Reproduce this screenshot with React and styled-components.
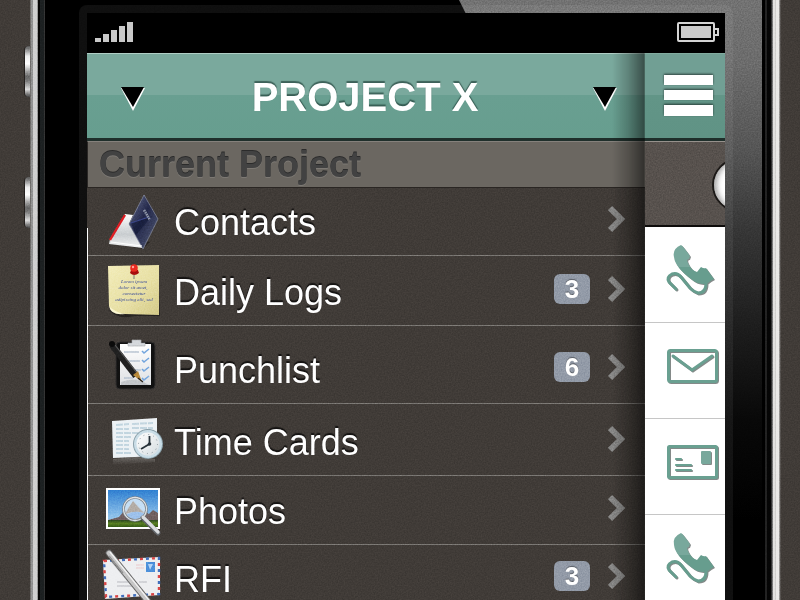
import styled, { createGlobalStyle } from 'styled-components';

const GlobalStyle = createGlobalStyle`
  * {
    box-sizing: border-box;
  }
  body {
    margin: 0;
    background: #3f3a36;
    font-family: 'Liberation Sans', Arial, Helvetica, sans-serif;
  }
  button {
    padding: 0;
    border: 0;
    background: none;
    font: inherit;
    cursor: pointer;
  }
`;

const ContactsIcon = () => (
  <Icon viewBox="0 0 56 54" aria-hidden="true">
    <defs>
      <linearGradient id="cover" x1="0" y1="0" x2="1" y2="1">
        <stop offset="0" stopColor="#6b7394" />
        <stop offset="0.45" stopColor="#23284a" />
        <stop offset="1" stopColor="#59617c" />
      </linearGradient>
      <linearGradient id="pages" x1="0" y1="0" x2="0" y2="1">
        <stop offset="0" stopColor="#ffffff" />
        <stop offset="0.6" stopColor="#c9cdd0" />
        <stop offset="1" stopColor="#f4f4f4" />
      </linearGradient>
    </defs>
    <path d="M5 51 L38 57 L45 50 L20 44z" fill="#000" opacity="0.35" />
    <path d="M20 22 L28 23 L24 32 L38 56 L4 52 L5 47z" fill="url(#pages)" />
    <path d="M5 48 L20 23" stroke="#df1c22" strokeWidth="2.4" />
    <path d="M39 3 L53 27 L38 57 L24 32z" fill="url(#cover)" stroke="#8b91a5" strokeWidth="0.7" />
    <path d="M26 31 L47 24 L31 43z" fill="#111735" opacity="0.6" />
    <path d="M26 31 L44 25" stroke="#3a468a" strokeWidth="1.3" />
    <path d="M39 18 L45 28" stroke="#8e95a8" strokeWidth="2.6" strokeDasharray="1.6 0.7" />
    <path d="M6 50 L37 54" stroke="#fff" strokeWidth="1" />
  </Icon>
);

const NoteIcon = () => (
  <Icon viewBox="0 0 56 54" aria-hidden="true">
    <defs>
      <linearGradient id="paper" x1="0" y1="0" x2="1" y2="1">
        <stop offset="0" stopColor="#f3edba" />
        <stop offset="0.6" stopColor="#e7dfa4" />
        <stop offset="1" stopColor="#d3c988" />
      </linearGradient>
    </defs>
    <path d="M4 48 Q12 58 30 54 L55 54 L54 30z" fill="#000" opacity="0.4" />
    <path d="M3 4 L54 3 L54 53 L20 52 Q6 51 4 44z" fill="url(#paper)" />
    <path d="M4 44 Q9 50 20 52 Q6 54 4 44z" fill="#fbf7d2" />
    <g
      fill="#3b4d9a"
      fontFamily="'Liberation Serif', serif"
      fontSize="5"
      fontStyle="italic"
      textAnchor="middle"
    >
      <text x="29" y="21">Lorem ipsum</text>
      <text x="28" y="27">dolor sit amet,</text>
      <text x="29" y="33">consectetur</text>
      <text x="29" y="39">adipiscing elit, sed</text>
    </g>
    <path d="M25 11 Q29 15 34 11 L33 8 H26z" fill="#a80c0c" />
    <circle cx="29" cy="6" r="3.8" fill="#ea2a20" />
    <circle cx="28" cy="5" r="1.2" fill="#ffa196" />
    <path d="M29 13 V17" stroke="#777" strokeWidth="1" />
  </Icon>
);

const ClipboardIcon = () => (
  <Icon viewBox="0 0 56 54" aria-hidden="true">
    <defs>
      <linearGradient id="sheet" x1="0" y1="0" x2="0" y2="1">
        <stop offset="0" stopColor="#ffffff" />
        <stop offset="1" stopColor="#dfe1e4" />
      </linearGradient>
    </defs>
    <rect x="11" y="2" width="39" height="47" rx="4" fill="#111" stroke="#302f2f" />
    <rect x="15" y="4" width="31" height="41" fill="url(#sheet)" />
    <path d="M23 6 V3 H27 V0 H36 V3 H40 V6z" fill="#d5d8dc" stroke="#a5a8ac" strokeWidth="0.6" />
    <path d="M19 12 H34 M22 21 H35 M27 30 H36 M19 38 H28" stroke="#b9c5d2" strokeWidth="1.4" />
    <g fill="none" stroke="#74a6de" strokeWidth="1.600">
      <path d="M37 11 l2 2 l5 -4" />
      <path d="M37 20 l2 2 l5 -4" />
      <path d="M37 29 l2 2 l5 -4" />
      <path d="M37 38 l2 2 l5 -4" />
    </g>
    <path d="M16 42 Q30 36 42 44 L45 45 H16z" fill="#aeb2b7" opacity="0.6" />
    <path d="M7 5 L31 36" stroke="#202020" strokeWidth="6.5" />
    <path d="M10 5 L32 33" stroke="#595959" strokeWidth="1.2" />
    <circle cx="7" cy="4" r="3" fill="#0a0a0a" />
    <path d="M28 35 L33 31 L37 42z" fill="#b7883a" />
    <path d="M33 38 L38 42" stroke="#222" strokeWidth="1.3" />
  </Icon>
);

const TimeIcon = () => (
  <Icon viewBox="0 0 56 54" aria-hidden="true">
    <defs>
      <linearGradient id="face" x1="0" y1="0" x2="1" y2="1">
        <stop offset="0" stopColor="#ffffff" />
        <stop offset="1" stopColor="#d5dde1" />
      </linearGradient>
      <linearGradient id="mirror" x1="0" y1="0" x2="0" y2="1">
        <stop offset="0" stopColor="#fff" stopOpacity="0.22" />
        <stop offset="1" stopColor="#fff" stopOpacity="0" />
      </linearGradient>
    </defs>
    <path d="M8 47 L32 45 L50 47 L50 50 L8 53z" fill="url(#mirror)" />
    <path d="M7 9 L52 6 V44 L8 46z" fill="#edf2f5" />
    <path
      d="M11 13 L24 12 M27 12 L48 11 M11 17 H24 M27 16 H48 M11 21 H48 M11 25 H27 M11 29 H24 M11 33 H24 M11 37 H24 M11 41 H27"
      stroke="#c3d6e0"
      strokeWidth="2"
      strokeDasharray="7 1"
    />
    <circle cx="43" cy="32" r="15" fill="#8aa0aa" />
    <circle cx="43" cy="32" r="14" fill="#c9dde7" />
    <circle cx="43" cy="32" r="11.5" fill="url(#face)" />
    <circle cx="43" cy="32" r="9.5" fill="none" stroke="#8a969c" strokeWidth="1" strokeDasharray="1 3.97" />
    <path d="M44.500 24 V32 L36 37" fill="none" stroke="#27323a" strokeWidth="1.8" />
    <circle cx="44.500" cy="32" r="1.8" fill="#27323a" />
  </Icon>
);

const PhotosIcon = () => (
  <Icon viewBox="0 0 56 54" aria-hidden="true">
    <defs>
      <linearGradient id="sky" x1="0" y1="0" x2="0" y2="1">
        <stop offset="0" stopColor="#2f7fd1" />
        <stop offset="1" stopColor="#b5dcf5" />
      </linearGradient>
      <linearGradient id="grass" x1="0" y1="0" x2="0" y2="1">
        <stop offset="0" stopColor="#2c4721" />
        <stop offset="0.5" stopColor="#587f22" />
        <stop offset="1" stopColor="#355b16" />
      </linearGradient>
    </defs>
    <rect x="1" y="7" width="54" height="41" fill="#fff" />
    <rect x="3" y="9" width="50" height="37" fill="url(#sky)" />
    <path d="M3 39 L14 36 L19 30 L29 20 L36 28 L44 33 L48 29 L53 32 V41 H3z" fill="#705f60" />
    <rect x="3" y="39" width="50" height="7" fill="url(#grass)" />
    <circle cx="30" cy="28" r="11" fill="#cfe4f7" opacity="0.9" />
    <path d="M20 33 L28 20 L34 27 L39 32 Q31 29 20 33z" fill="#b3aca6" />
    <path d="M21 34 Q30 28 40 33 Q34 40 25 37z" fill="#8bb8ec" opacity="0.7" />
    <circle cx="30" cy="28" r="11.500" fill="none" stroke="#787d82" strokeWidth="2.600" />
    <circle cx="30" cy="28" r="11.500" fill="none" stroke="#dee2e5" strokeWidth="1.300" />
    <path d="M38 37 L53 52" stroke="#606468" strokeWidth="5" strokeLinecap="round" />
    <path d="M38 36 L53 51" stroke="#dadde0" strokeWidth="3.200" strokeLinecap="round" />
  </Icon>
);

const LetterIcon = () => (
  <Icon viewBox="0 0 56 54" aria-hidden="true">
    <path d="M-2 11 L55 8 V46 L0 50z" fill="#eeeff1" />
    <path d="M-1 12 L54 9 V45 L1 48z" fill="none" stroke="#d84545" strokeWidth="2.400" strokeDasharray="3 9" />
    <path
      d="M-1 12 L54 9 V45 L1 48z"
      fill="none"
      stroke="#416fbc"
      strokeWidth="2.400"
      strokeDasharray="3 9"
      strokeDashoffset="6"
    />
    <rect x="41" y="13" width="9" height="10" fill="#4b8fda" />
    <path d="M43 15 h5 l-3 6z" fill="#b2d4f6" />
    <path d="M31 19 h8 M31 16 h8" stroke="#e9c9cc" strokeWidth="1.200" />
    <path d="M12 33 H24 M12 37 H27 M34 33 H42" stroke="#d3d4d8" strokeWidth="2" />
    <path d="M6 9 L46 57" stroke="#000" strokeWidth="5" opacity="0.2" />
    <path d="M4 4 L46 56" stroke="#666" strokeWidth="6.600" strokeLinecap="round" />
    <path d="M4 4 L46 56" stroke="#c6c6c6" strokeWidth="4.800" strokeLinecap="round" />
    <path d="M5 3 L47 55" stroke="#f4f4f4" strokeWidth="1.200" />
    <path d="M4 7 L18 24" stroke="#8f8f8f" strokeWidth="1.200" />
  </Icon>
);

const PhoneIcon = () => (
  <ActionSvg viewBox="0 0 54 54" height="54" aria-hidden="true">
    <defs>
      <linearGradient id="handset" x1="0" y1="0" x2="0" y2="1">
        <stop offset="0.560" stopColor="#78a89c" />
        <stop offset="0.570" stopColor="#679d8e" />
      </linearGradient>
    </defs>
    <path
      d="M17 2 Q19 3 26 13 L25 16 Q22 16 24 20 Q27 27 33 29 L37 24 Q40 26 42 25 L50 36 Q46 38 44 40 Q35 43 27 36 Q11 24 10 14 Q8 6 17 2z"
      fill="url(#handset)"
    />
    <path
      d="M42 40 Q42 50 34 50 Q30 49 26 45 L17 34 Q13 29 8 31 Q2 34 5 39 L12 46"
      fill="none"
      stroke="#679d8e"
      strokeWidth="3"
      strokeLinecap="round"
    />
  </ActionSvg>
);

const MailIcon = () => (
  <ActionSvg viewBox="0 0 54 36" height="36" aria-hidden="true">
    <g fill="none" stroke="#6aa091" strokeWidth="3">
      <rect x="4.500" y="2.500" width="48" height="31" rx="2" />
      <path d="M9 8 L28 22 L48 8" strokeLinecap="round" />
    </g>
  </ActionSvg>
);

const CardIcon = () => (
  <ActionSvg viewBox="0 0 54 36" height="36" aria-hidden="true">
    <rect x="4.500" y="2.500" width="48" height="31" rx="1" fill="none" stroke="#6aa091" strokeWidth="3" />
    <rect x="37" y="7" width="10" height="13" rx="1" fill="#78a89c" />
    <path
      d="M12 15 H17 M12 21 H27 M12 26 H27"
      stroke="#6aa091"
      strokeWidth="2.200"
      strokeLinecap="round"
    />
  </ActionSvg>
);

const Arrow = () => (
  <svg width="24" height="24" viewBox="0 0 24 24" aria-hidden="true">
    <path d="M0 1 L12 24 L24 1z" fill="#fff" />
    <path d="M0 0 H23 L12 20z" fill="#000" />
  </svg>
);

// drop = space above the row content
const ITEMS = [
  { name: 'Contacts', icon: ContactsIcon, drop: 4 },
  { name: 'Daily Logs', icon: NoteIcon, drop: 6, count: 3 },
  { name: 'Punchlist', icon: ClipboardIcon, drop: 14, count: 6 },
  { name: 'Time Cards', icon: TimeIcon, drop: 8 },
  { name: 'Photos', icon: PhotosIcon, drop: 5 },
  { name: 'RFI', icon: LetterIcon, drop: 4, count: 3 },
];

const ACTIONS = [
  { name: 'Call', icon: PhoneIcon },
  { name: 'Email', icon: MailIcon },
  { name: 'Business card', icon: CardIcon },
  { name: 'Call second contact', icon: PhoneIcon },
];

const MenuItem = ({ item }) => {
  const { name, icon: ItemIcon, drop, count } = item;

  return (
    <li>
      <Row href="#" $drop={drop}>
        <ItemIcon />
        <Label>{name}</Label>
        {count && <Badge>{count}</Badge>}
        <svg width="18" height="28" viewBox="0 0 18 28" aria-hidden="true">
          <path d="M2 3 L13 14 L2 25" fill="none" stroke="#868685" strokeWidth="6" />
        </svg>
      </Row>
    </li>
  );
};

const Grain = () => (
  <GrainSvg aria-hidden="true">
    <filter id="grain" x="0" y="0" width="100%" height="100%" colorInterpolationFilters="sRGB">
      <feTurbulence type="fractalNoise" baseFrequency="0.7" numOctaves="2" />
      <feColorMatrix values="1 0 0 0 0  1 0 0 0 0  1 0 0 0 0  0 0 0 0 1" />
    </filter>
    <rect width="100%" height="100%" filter="url(#grain)" />
  </GrainSvg>
);

const App = () => (
  <>
    <GlobalStyle />
    <Page>
      <Grain />
      <Side>
        <VolumeKey />
        <VolumeKey />
      </Side>
      <Phone>
        <LeftRim />
        <Face>
          <Bezel>
            <Screen>
              <StatusBar>
                <svg width="40" height="20" viewBox="0 0 40 20" aria-label="Signal">
                  <path
                    d="M0 16h6v4H0z M8 12h6v8H8z M16 8h6v12h-6z M24 4h6v16h-6z M32 0h6v20h-6z"
                    fill="#c9c9c9"
                  />
                </svg>
                <svg width="42" height="20" viewBox="0 0 42 20" aria-label="Battery">
                  <rect x="1" y="1" width="36" height="18" rx="1" fill="none" stroke="#d4d4d4" strokeWidth="2" />
                  <rect x="4" y="4" width="30" height="12" fill="#cbcbcb" />
                  <path d="M38 7 H41 V13 H38" fill="none" stroke="#d4d4d4" strokeWidth="2" />
                </svg>
              </StatusBar>
              <Panels>
                <Menu>
                  <MenuBar>
                    <button aria-label="Previous project">
                      <Arrow />
                    </button>
                    <Title>PROJECT X</Title>
                    <button aria-label="Next project">
                      <Arrow />
                    </button>
                  </MenuBar>
                  <Section>Current Project</Section>
                  <ListArea>
                    <List>
                      {ITEMS.map((item) => (
                        <MenuItem key={item.name} item={item} />
                      ))}
                    </List>
                    <Grain />
                  </ListArea>
                </Menu>
                <Content>
                  <ContentBar>
                    <button aria-label="Toggle menu">
                      <Burger viewBox="0 0 50 42" aria-hidden="true">
                        <path d="M0 0h49v10H0z M0 15h49v10H0z M0 30h49v11H0z" fill="#fff" />
                      </Burger>
                    </button>
                  </ContentBar>
                  <SearchBar>
                    <Knob />
                    <Grain />
                  </SearchBar>
                  {ACTIONS.map(({ name, icon: ActionIcon }) => (
                    <Action key={name} href="#" aria-label={name}>
                      <ActionIcon />
                    </Action>
                  ))}
                </Content>
              </Panels>
            </Screen>
          </Bezel>
        </Face>
        <RightRim />
      </Phone>
    </Page>
  </>
);

export default App;

const Page = styled.div`
  position: relative;
  display: grid;
  grid-template-columns: 30px 1fr 19px;
  height: 100vh;
  overflow: hidden;
  background: #403b37;
`;

const GrainSvg = styled.svg`
  position: absolute;
  inset: 0;
  width: 100%;
  height: 100%;
  opacity: 0.18;
  mix-blend-mode: overlay;
  pointer-events: none;
  z-index: 1;
`;

const Side = styled.div`
  display: flex;
  flex-direction: column;
  align-items: flex-end;
  gap: 80px;
  padding-top: 46px;
`;

const VolumeKey = styled.div`
  width: 6px;
  height: 51px;
  border-left: 1px solid #25211f;
  border-radius: 4px 0 0 4px;
  background: linear-gradient(#555 0, #eee 20%, #fff 35%, #666 60%, #777 68%, #ddd 85%, #444 100%);
`;

const Phone = styled.div`
  display: flex;
  min-width: 0;
  background: #000;
`;

const LeftRim = styled.div`
  flex: none;
  width: 15px;
  background: linear-gradient(
    90deg,
    #6f6d6b 0 1px,
    #929292 1px 3px,
    #cfcfcf 3px 7px,
    #999 7px 8px,
    #050505 8px 10px,
    #1c2021 10px 14px,
    #333 14px 15px
  );
`;

const RightRim = styled.div`
  flex: none;
  width: 19px;
  background: linear-gradient(
    90deg,
    #000 0 3px,
    #222 3px 5px,
    #050505 5px 9px,
    #333 9px 10px,
    #777 10px 11px,
    #e2e1df 11px 13px,
    #cfcecc 13px 14px,
    #e9e8e6 14px 17px,
    #989694 17px 18px,
    #55514e 18px 19px
  );
`;

const Face = styled.div`
  position: relative;
  flex: 1;
  min-width: 0;
  padding: 5px 29px 0 34px;

  &::before {
    content: '';
    position: absolute;
    inset: 0 0 0 414px;
    background: linear-gradient(#727272 0, #6c6c6c 60px, #555 150px, #363636 230px, #1c1c1c 330px, #080808 420px, #000 520px);
    clip-path: polygon(0 0, 100% 0, 100% 100%, 50% 100%, 8px 16px);
  }
`;

const Bezel = styled.div`
  position: relative;
  height: 100%;
  padding: 8px 8px 0;
  border-radius: 8px 8px 0 0;
  background: rgba(255, 255, 255, 0.06);
`;

const Screen = styled.div`
  position: relative;
  z-index: 2;
  display: flex;
  flex-direction: column;
  height: 100%;
  overflow: hidden;
  background: #000;
`;

const StatusBar = styled.div`
  display: flex;
  flex: none;
  justify-content: space-between;
  height: 40px;
  padding: 9px 6px 0 8px;
`;

const Panels = styled.div`
  display: flex;
  flex: 1;
`;

const Menu = styled.nav`
  position: relative;
  display: flex;
  flex-direction: column;
  flex: 1;
  min-width: 0;
  background: #403b37;

  &::after {
    content: '';
    position: absolute;
    inset: 0 0 0 auto;
    width: 32px;
    border-right: 1px solid rgba(0, 0, 0, 0.4);
    background: linear-gradient(90deg, transparent, rgba(0, 0, 0, 0.22) 50%, rgba(0, 0, 0, 0.52));
    pointer-events: none;
  }
`;

const Bar = styled.div`
  display: flex;
  flex: none;
  align-items: center;
  height: 88px;
  border-top: 1px solid #b0cec5;
  border-bottom: 3px solid #1f2f2b;
  background: linear-gradient(#7aa99d 0 41px, #699f91 41px, #679e8f 100%);

  svg {
    display: block;
  }
`;

const MenuBar = styled(Bar)`
  padding: 6px 28px 0 34px;
`;

const ContentBar = styled(Bar)`
  justify-content: center;
  padding-left: 7px;
  border-top-color: #82ab9f;
  background: linear-gradient(#719f94 0 41px, #629587 41px, #609385 100%);
`;

const Title = styled.h1`
  flex: 1;
  margin: 0;
  padding: 0 8px 5px 0;
  color: #fff;
  font-size: 40px;
  line-height: 44px;
  text-align: center;
  text-shadow: 0 -2px 1px rgba(20, 50, 44, 0.6);
`;

const Burger = styled.svg`
  width: 50px;
  height: 42px;
  overflow: visible;
  filter: drop-shadow(0 -1px 1px rgba(0, 0, 0, 0.6));
`;

const Section = styled.h2`
  flex: none;
  height: 47px;
  margin: 0;
  padding-left: 11px;
  border-top: 1px solid #85817c;
  border-bottom: 1px solid #2a2623;
  border-left: 1px solid #2b2826;
  background: #6b6761;
  color: #424242;
  font-size: 36px;
  line-height: 45px;
  text-shadow: 0 -1px 0 #2b2b2b, 0 1px 0 rgba(255, 255, 255, 0.12);
`;

const ListArea = styled.div`
  position: relative;
`;

const List = styled.ul`
  margin: 0;
  padding: 0 0 0 1px;
  list-style: none;
  background: linear-gradient(90deg, #fff 1px, transparent 1px) 0 40px no-repeat;
`;

const Row = styled.a`
  display: flex;
  align-items: center;
  padding: ${({ $drop }) => $drop}px 19px 9px 17px;
  border-bottom: 1px solid #7b7874;
  background: #403b37;
  color: #fff;
  text-decoration: none;
`;

const Icon = styled.svg`
  flex: none;
  width: 56px;
  height: 54px;
  margin-right: 13px;
  overflow: visible;
`;

const Label = styled.span`
  flex: 1;
  padding-top: 7px;
  font-size: 36px;
  line-height: 40px;
  text-shadow: 0 -2px 1px rgba(0, 0, 0, 0.7);
`;

const Badge = styled.span`
  width: 36px;
  height: 30px;
  margin-right: 18px;
  border-radius: 6px;
  background: #929aa7;
  font-size: 26px;
  font-weight: bold;
  line-height: 30px;
  text-align: center;
  text-shadow: 0 -1px 1px rgba(0, 0, 0, 0.4);
`;

const Content = styled.main`
  flex: none;
  width: 80px;
  background: #fff;
`;

const SearchBar = styled.div`
  position: relative;
  height: 86px;
  padding: 16px 0 0 67px;
  border-top: 1px solid #96918c;
  border-bottom: 2px solid #0e0c0b;
  background: #57514d;
  overflow: hidden;
`;

const Knob = styled.div`
  width: 54px;
  height: 54px;
  border: 2px solid #1c1917;
  border-radius: 50%;
  background: #fff;
  box-shadow: inset 3px 0 5px #aaa;
`;

const Action = styled.a`
  display: flex;
  align-items: center;
  height: 96px;
  padding: 0 6px 10px 19px;
  border-bottom: 1px solid #c6c6c6;
`;

const ActionSvg = styled.svg`
  flex: none;
  width: 54px;
  filter: drop-shadow(1px 1px 0 rgba(50, 60, 58, 0.6));
`;
